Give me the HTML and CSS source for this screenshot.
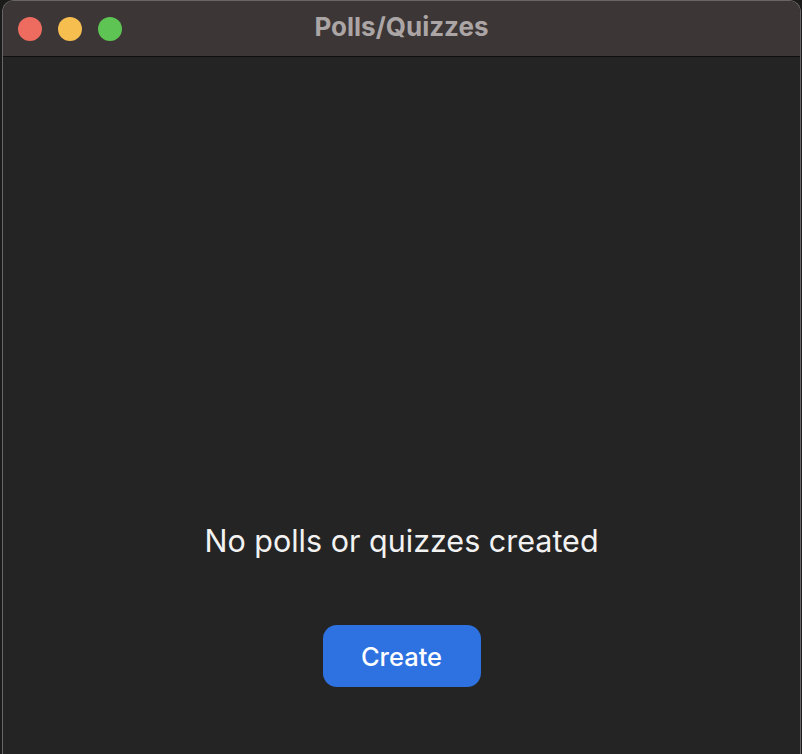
FILE: index.html
```html
<!DOCTYPE html>
<html>
<head>
<meta charset="utf-8">
<link rel="stylesheet" href="styles.css">
</head>
<body>
<div class="screen">
  <div class="window">
    <div class="titlebar">
      <div class="lights">
        <span class="light red"></span>
        <span class="light yellow"></span>
        <span class="light green"></span>
      </div>
      <div class="title">Polls/Quizzes</div>
    </div>
    <div class="content">
      <div class="empty">No polls or quizzes created</div>
      <button class="create">Create</button>
    </div>
  </div>
</div>
</body>
</html>
```
FILE: styles.css
```css
html, body {
  margin: 0;
  padding: 0;
  height: 100%;
  background: #1b1b1b;
}
.screen {
  height: 754px;
  padding: 0 1px 0 2px;
  box-sizing: border-box;
  display: flex;
}
.window {
  flex: 1;
  display: flex;
  flex-direction: column;
  border: 1px solid #6b6666;
  border-bottom: none;
  border-radius: 12px 12px 0 0;
  overflow: hidden;
  background: #242424;
}
.titlebar {
  height: 55px;
  flex: none;
  background: #3c3636;
  border-bottom: 1px solid #0f0f0f;
  display: flex;
  align-items: center;
  position: relative;
}
.lights {
  display: flex;
  gap: 16px;
  padding-left: 15px;
}
.light {
  width: 24px;
  height: 24px;
  border-radius: 50%;
  display: block;
}
.red { background: #ee6b60; }
.yellow { background: #f5be4f; }
.green { background: #5ec453; }
.title {
  position: absolute;
  left: 0;
  right: 0;
  top: 10px;
  text-align: center;
  font-family: Inter, "Liberation Sans", sans-serif;
  font-weight: 700;
  font-size: 26px;
  line-height: 32px;
  color: #aba5a5;
}
.content {
  flex: 1;
  display: flex;
  flex-direction: column;
  align-items: center;
  padding-top: 462px;
}
.empty {
  font-family: Inter, "Liberation Sans", sans-serif;
  font-size: 30.5px;
  color: #f2f2f2;
  line-height: 44px;
}
.create {
  margin-top: 62px;
  width: 158px;
  height: 62px;
  border: none;
  border-radius: 14px;
  background: #2e72e2;
  color: #ffffff;
  font-family: Inter, "Liberation Sans", sans-serif;
  font-size: 25.5px;
  font-weight: 500;
}
```
